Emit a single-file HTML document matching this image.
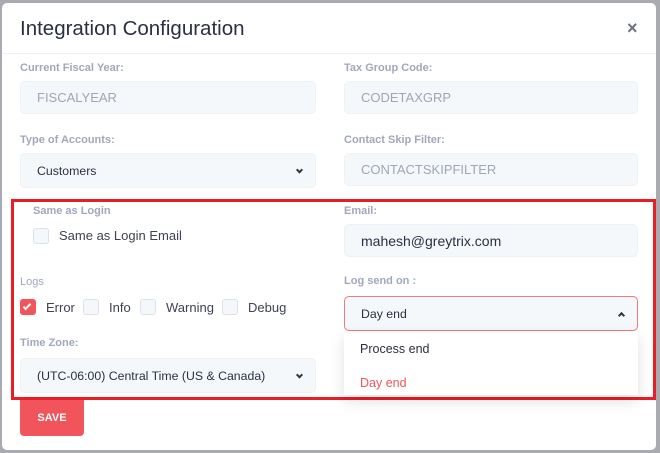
<!DOCTYPE html><html><head><style>
*{box-sizing:border-box;margin:0;padding:0}
body{width:660px;height:453px;background:#a9abb0;font-family:"Liberation Sans",sans-serif;position:relative;overflow:hidden}
.m{position:absolute;left:2px;top:3px;width:654px;height:447px;background:#fff;border-radius:5px}
.a{position:absolute}
.t{left:20px;top:17px;font-size:20.5px;color:#2b2f44}
.hr{left:2px;top:53px;width:654px;height:1px;background:#eff2f5}
.x{left:627px;top:18px;font-size:18px;color:#6c7080;font-weight:bold}
.l{font-size:11px;font-weight:bold;color:#a1a8bd}
.i{background:#f5f8fa;border:1px solid #eef1f5;border-radius:5px;font-size:13px;color:#a1a5b7;padding-left:16px;display:flex;align-items:center}
.d{color:#2b2f44}
.s{font-size:12.3px}
.cb{width:16px;height:16px;border:1px solid #dde1e8;background:#f5f8fa;border-radius:3px}
.tx{font-size:13px;color:#3f4254}
.chev{position:absolute;right:13px;top:50%;width:5px;height:5px;border-right:2px solid #333;border-bottom:2px solid #333;transform:translateY(-70%) rotate(45deg)}
</style></head><body>
<div class="m"></div>
<div class="a t">Integration Configuration</div>
<div class="a hr"></div>
<div class="a x">×</div>
<div class="a l" style="left:20px;top:62px">Current Fiscal Year:</div>
<div class="a i" style="left:20px;top:81px;width:296px;height:33px">FISCALYEAR</div>
<div class="a l" style="left:344px;top:62px">Tax Group Code:</div>
<div class="a i" style="left:344px;top:81px;width:294px;height:33px">CODETAXGRP</div>
<div class="a l" style="left:20px;top:134px">Type of Accounts:</div>
<div class="a i d s" style="left:20px;top:153px;width:296px;height:35px">Customers<span class="chev"></span></div>
<div class="a l" style="left:344px;top:134px">Contact Skip Filter:</div>
<div class="a i" style="left:344px;top:153px;width:294px;height:33px">CONTACTSKIPFILTER</div>
<div class="a l" style="left:33px;top:205px">Same as Login</div>
<div class="a cb" style="left:33px;top:228px"></div>
<div class="a tx" style="left:59px;top:228px">Same as Login Email</div>
<div class="a l" style="left:344px;top:205px">Email:</div>
<div class="a i d" style="left:344px;top:224px;width:294px;height:33px;font-size:14px">mahesh@greytrix.com</div>
<div class="a l" style="left:20px;top:276px;font-weight:normal">Logs</div>
<div class="a cb" style="left:20px;top:299px;background:#f1545a;border-color:#f1545a"><div style="position:absolute;left:4px;top:2px;width:4px;height:8px;border-right:2px solid #fff;border-bottom:2px solid #fff;transform:rotate(45deg)"></div></div>
<div class="a tx" style="left:46px;top:300px">Error</div>
<div class="a cb" style="left:83px;top:299px"></div>
<div class="a tx" style="left:109px;top:300px">Info</div>
<div class="a cb" style="left:140px;top:299px"></div>
<div class="a tx" style="left:166px;top:300px">Warning</div>
<div class="a cb" style="left:222px;top:299px"></div>
<div class="a tx" style="left:248px;top:300px">Debug</div>
<div class="a l" style="left:344px;top:275px">Log send on :</div>
<div class="a i d s" style="left:344px;top:296px;width:294px;height:35px;border-color:#f07b7b">Day end<span class="chev" style="transform:translateY(-20%) rotate(225deg)"></span></div>
<div class="a l" style="left:20px;top:337px">Time Zone:</div>
<div class="a i d s" style="left:20px;top:358px;width:296px;height:35px">(UTC-06:00) Central Time (US &amp; Canada)<span class="chev"></span></div>
<div class="a" style="left:11px;top:199px;width:645px;height:201px;border:3px solid #ec1c24"></div>
<div class="a" style="left:344px;top:331px;width:294px;height:64px;background:#fff;box-shadow:0 6px 14px rgba(0,0,0,.12)">
<div class="a tx" style="left:16px;top:11px;color:#2b2f44;font-size:12.5px">Process end</div>
<div class="a tx" style="left:16px;top:45px;color:#f1545a;font-size:12.5px">Day end</div></div>
<div class="a" style="left:20px;top:400px;width:64px;height:36px;background:#f1545a;border-radius:0 0 4px 4px;color:#fff;font-size:11px;font-weight:bold;display:flex;align-items:center;justify-content:center">SAVE</div>
</body></html>
